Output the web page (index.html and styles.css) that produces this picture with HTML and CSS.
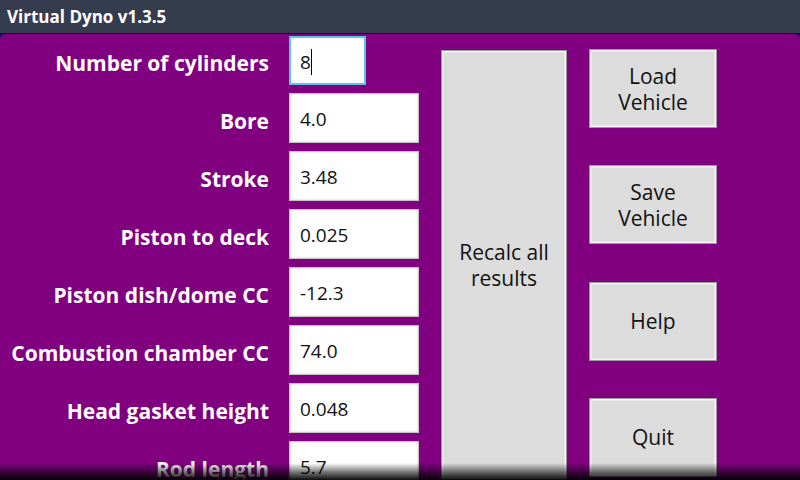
FILE: index.html
```html
<!DOCTYPE html>
<html>
<head>
<meta charset="utf-8">
<link rel="stylesheet" href="styles.css">
</head>
<body>
<div class="screen">
  <div class="titlebar">Virtual Dyno v1.3.5</div>
  <div class="content">
    <div class="form">
      <div class="row"><span class="label">Number of cylinders</span><div class="input focused"><span>8</span><span class="caret"></span></div></div>
      <div class="row"><span class="label">Bore</span><div class="input">4.0</div></div>
      <div class="row"><span class="label">Stroke</span><div class="input">3.48</div></div>
      <div class="row"><span class="label">Piston to deck</span><div class="input">0.025</div></div>
      <div class="row"><span class="label">Piston dish/dome CC</span><div class="input">-12.3</div></div>
      <div class="row"><span class="label">Combustion chamber CC</span><div class="input">74.0</div></div>
      <div class="row"><span class="label">Head gasket height</span><div class="input">0.048</div></div>
      <div class="row"><span class="label">Rod length</span><div class="input">5.7</div></div>
    </div>
    <div class="recalc-col">
      <div class="btn tall">Recalc all<br>results</div>
    </div>
    <div class="side">
      <div class="btn">Load<br>Vehicle</div>
      <div class="btn">Save<br>Vehicle</div>
      <div class="btn">Help</div>
      <div class="btn">Quit</div>
    </div>
    <div class="fade"></div>
  </div>
</div>
</body>
</html>
```
FILE: styles.css
```css
html, body {
  margin: 0;
  padding: 0;
  background: #0a0a4a;
}
.screen {
  width: 800px;
  height: 480px;
  overflow: hidden;
  display: flex;
  flex-direction: column;
  font-family: "Open Sans", "DejaVu Sans", sans-serif;
  background: #0c0c58;
}
.titlebar {
  height: 33px;
  flex: none;
  background: #343c4e;
  border-bottom: 1px solid #15181f;
  color: #ffffff;
  font-weight: bold;
  font-size: 17px;
  line-height: 33px;
  padding-left: 7px;
}
.content {
  position: relative;
  flex: 1;
  background: #800080;
  border-radius: 5px 5px 0 0;
  display: flex;
  padding-top: 1px;
  overflow: hidden;
}
.form {
  display: flex;
  flex-direction: column;
  gap: 8px;
  width: 419px;
  flex: none;
}
.row {
  height: 50px;
  flex: none;
  display: flex;
  align-items: center;
}
.label {
  width: 269px;
  text-align: right;
  color: #ffffff;
  font-weight: bold;
  font-size: 21px;
  padding-top: 5px;
  white-space: nowrap;
}
.input {
  margin-left: 20px;
  width: 130px;
  height: 50px;
  box-sizing: border-box;
  background: #ffffff;
  border: 1px solid #c4c4c4;
  box-shadow: inset 0 0 2px rgba(0,0,0,0.25);
  font-size: 19px;
  color: #111;
  padding-left: 10px;
  display: flex;
  align-items: center;
  padding-top: 2px;
}
.input.focused {
  width: 77px;
  height: 49px;
  align-self: flex-start;
  margin-top: 1px;
  border: 2px solid #5cc4e2;
  box-shadow: none;
  padding-left: 9px;
}
.caret {
  display: inline-block;
  width: 1px;
  height: 26px;
  background: #000;
}
.recalc-col {
  width: 126px;
  margin-left: 22px;
  padding-top: 15px;
  flex: none;
  display: flex;
  flex-direction: column;
}
.btn {
  box-sizing: border-box;
  background: #dcdcdc;
  border: 1px solid #9a9a9a;
  box-shadow: inset 0 0 0 1.5px #f4f4f4;
  color: #111;
  font-size: 21px;
  line-height: 26px;
  text-align: center;
  display: flex;
  align-items: center;
  justify-content: center;
}
.btn.tall {
  flex: 1;
  height: 460px;
}
.side {
  width: 128px;
  margin-left: 22px;
  padding-top: 14px;
  flex: none;
  display: flex;
  flex-direction: column;
  gap: 37.3px;
}
.side .btn {
  height: 79px;
  flex: none;
}
.fade {
  position: absolute;
  left: 0;
  right: 0;
  bottom: 0;
  height: 17px;
  background: linear-gradient(to bottom, rgba(0,0,0,0), rgba(0,0,0,0.55) 55%, rgba(0,0,0,0.95));
}
```
